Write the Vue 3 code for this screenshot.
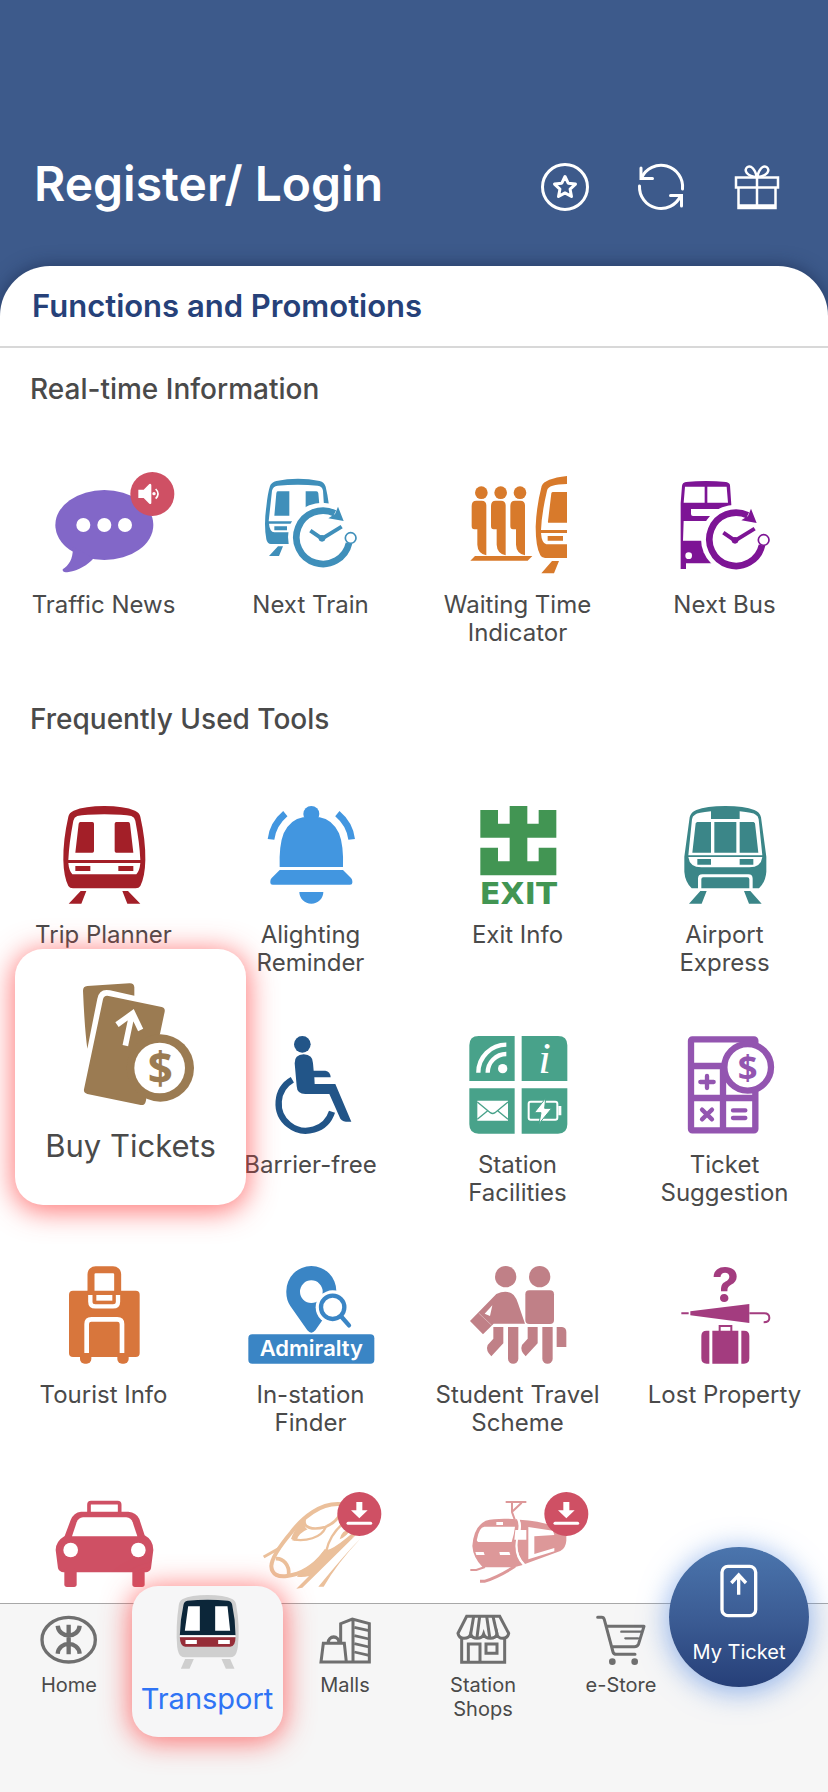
<template>
  <div class="page">
    <header class="top">
      <a class="login" href="#login">Register/ Login</a>
      <nav class="top-actions">
        <button type="button" aria-label="Favourites">
          <svg viewBox="0 0 54 54" fill="none" stroke="#fff" stroke-width="3" stroke-linejoin="round">
            <circle cx="27" cy="27" r="22.5" />
            <path d="M27 16.5l3.2 6.7 7.3.9-5.4 5.1 1.4 7.3-6.5-3.6-6.5 3.6 1.4-7.3-5.4-5.1 7.3-.9z" />
          </svg>
        </button>
        <button type="button" aria-label="Refresh">
          <svg viewBox="0 0 54 54" fill="none" stroke="#fff" stroke-width="3" stroke-linecap="round">
            <path d="M7.5 18A21.5 21.5 0 0 1 48.5 29M5.5 26A21.5 21.5 0 0 0 46.5 36" />
            <path d="M7 8v10.5h11.5M47.5 46V35.5h-11" />
          </svg>
        </button>
        <button type="button" aria-label="Rewards">
          <svg viewBox="0 0 54 54" fill="none" stroke="#fff" stroke-width="2.5">
            <path d="M6 17.5h42v10H6zM8.5 27.5V48h37V27.5M27 17.5V48M8.5 45.500h37" />
            <path d="M27 17C25 9 21 5 17.5 7 13 10 17 16.5 27 17zM27 17c2-8 6-12 9.500-10 4.500 3 .5 9.500-9.500 10z" />
          </svg>
        </button>
      </nav>
    </header>

    <main class="sheet">
      <h1 class="sheet-title">Functions and Promotions</h1>
      <div class="sheet-body">
        <section v-for="group in groups" :key="group.title" class="group">
          <h2>{{ group.title }}</h2>
          <div class="grid">
            <div v-for="tool in group.tools" :key="tool.name" class="cell">
              <button type="button" :class="tool.featured ? 'featured' : 'tool'" :aria-label="tool.name">
                <svg :viewBox="tool.box" :color="tool.color" fill="currentColor" v-html="tool.icon"></svg>
                <span v-if="!tool.iconOnly">{{ tool.name }}</span>
              </button>
            </div>
          </div>
        </section>
      </div>
    </main>

    <nav class="tabs">
      <a
        v-for="tab in tabs"
        :key="tab.name"
        :href="'#' + tab.id"
        :class="['tab', { active: tab.id === current }]"
        @click.prevent="current = tab.id"
      >
        <svg :viewBox="tab.box" fill="none" stroke="currentColor" v-html="tab.icon"></svg>
        <span>{{ tab.name }}</span>
      </a>
      <button type="button" class="ticket">
        <svg viewBox="918 282 114 162" fill="none" stroke="#fff" stroke-width="10">
          <rect x="924" y="289" width="101" height="148" rx="18" />
          <path d="M974 374V314M952 339l22-24 22 24" />
        </svg>
        <span>My Ticket</span>
      </button>
    </nav>
  </div>
</template>

<script setup>
import { ref } from 'vue';

const current = ref('transport');

// icon canvases: left-hand and right-hand drawing areas
const L = '104 78 414 294';
const R = '725 78 414 294';

// clock with an arrow, shared by the "next ..." icons
const clock = (dx, dy) => `
  <g transform="translate(${dx} ${dy})" fill="none" stroke="currentColor">
    <circle cx="966" cy="261" r="103" fill="#fff" stroke="none"/>
    <path d="M1003 190A80 80 0 1 0 1046 280" stroke-width="20"/>
    <path d="M1013 170L1030 213L984 205L1004 192Z" fill="currentColor" stroke="none"/>
    <circle cx="1051" cy="264" r="16" fill="#fff" stroke-width="5"/>
    <path d="M930 242L965 266L1024 230" stroke-width="12"/>
    <circle cx="965" cy="265" r="10" fill="currentColor" stroke="none"/>
  </g>`;

const downloadBadge = (x) => `
  <g transform="translate(${x} 132)">
    <circle r="66" fill="#cf5064"/>
    <path d="M-9-36H9V-11H25L0 13L-25-11H-9Z" fill="#fff"/>
    <path d="M-34 28H34" stroke="#fff" stroke-width="9" stroke-linecap="round"/>
  </g>`;

const dollar = (x, y, size) =>
  `<text x="${x}" y="${y}" font-size="${size}" font-weight="700" font-family="Noto Sans, sans-serif" text-anchor="middle">$</text>`;

const waiting = [0, 58, 116].map((x) => `
  <g transform="translate(${x} 0)">
    <circle cx="201" cy="128" r="19"/>
    <path d="M186 152H202Q216 152 216 166V316Q190 310 189 284V238H180Q172 238 172 228V168Q172 152 186 152Z"/>
  </g>`).join('');

const legs = [0, 103].map((x) => `
  <g transform="translate(${x} 0)">
    <path d="M237 261H267V310L231 349Q213 332 220 315L237 296Z"/>
    <path d="M281 261H312V356A15 15 0 0 1 281 356Z"/>
  </g>`).join('');

const groups = [
  {
    title: 'Real-time Information',
    tools: [
      {
        name: 'Traffic News', color: '#8267c8', box: L,
        icon: `<ellipse cx="312" cy="225" rx="147" ry="105"/>
          <path d="M218 290C218 330 205 345 187 358C186 368 195 368 205 366C235 362 262 345 280 325Z"/>
          <g fill="#fff"><circle cx="249" cy="225" r="21"/><circle cx="312" cy="225" r="21"/><circle cx="374" cy="225" r="21"/></g>
          <circle cx="456" cy="132" r="66" fill="#cf5064"/>
          <path d="M414 119H430L447 102Q453 100 453 106V158Q453 164 447 161L430 144H414Z" fill="#fff"/>
          <circle cx="461" cy="131" r="5" fill="#fff"/>
          <path d="M466 117Q480 131 466 146" fill="none" stroke="#fff" stroke-width="5"/>`
      },
      {
        name: 'Next Train', color: '#3f8fba', box: R,
        icon: `<path d="M862 282H812Q801 282 798 268Q790 225 798 170Q802 130 809 108Q813 97 828 93Q893 80 958 93Q972 97 976 110Q982 135 985 160V282Z"/>
          <path d="M805 214L815 122Q818 108 832 107Q893 102 952 107Q966 108 968 122L974 214ZM806 221H890V247H822Q808 246 806 221Z" fill="#fff"/>
          <path d="M832 124H867V197H822L828 130Q829 124 832 124ZM916 124H948Q953 124 954 130L958 175H916ZM822 229H860V241H822ZM833 289H848L836 318H806Z"/>
          ${clock(0, 0)}`
      },
      {
        name: 'Waiting Time Indicator', color: '#d87a2b', box: L,
        icon: `${waiting}
          <path d="M182 318H354L340 332H168Z"/>
          <path d="M458 78Q390 86 382 108Q366 170 364 230Q364 290 378 316Q382 324 392 324H458Z"/>
          <path d="M458 102Q402 102 398 122Q382 190 380 240H458ZM380 249H458V283H396Q382 280 380 249Z" fill="#fff"/>
          <path d="M416 126H458V218H402Q400 218 401 214L411 130Q412 126 416 126ZM400 258H446V272H400ZM413 333H434L419 370H381Z"/>`
      },
      {
        name: 'Next Bus', color: '#7d1495', box: R,
        icon: `<path d="M799 357V160L803 108Q804 98 815 96Q875 90 935 96Q946 98 947 106L951 165V340H815V357Z"/>
          <path d="M812 110H871V158H808ZM879 110H937L941 158H879ZM830 177H930V198H836Q830 198 830 192ZM808 213H900V272H806Z" fill="#fff"/>
          <circle cx="823" cy="317" r="10" fill="#fff"/>
          ${clock(-3, 6)}`
      }
    ]
  },
  {
    title: 'Frequently Used Tools',
    tools: [
      {
        name: 'Trip Planner', color: '#a31f28', box: L,
        icon: `<path d="M312 78Q370 78 404 92Q418 98 420 110Q436 180 435 240Q434 290 420 318Q416 325 406 325H218Q208 325 204 318Q190 290 189 240Q188 180 204 110Q206 98 220 92Q254 78 312 78Z"/>
          <path d="M312 103Q370 103 393 108Q403 112 405 122Q418 190 420 240H204Q206 190 219 122Q221 112 231 108Q254 103 312 103ZM204 249H420Q418 272 408 283H216Q206 272 204 249Z" fill="#fff"/>
          <path d="M240 126H276Q281 126 281 131V213Q281 218 276 218H225L235 131Q236 126 240 126ZM384 126H348Q343 126 343 131V213Q343 218 348 218H399L389 131Q388 126 384 126ZM225 258H270V273H225ZM354 258H399V273H354ZM241 333H258L243 371H205ZM366 333H383L420 371H381Z"/>`
      },
      {
        name: 'Alighting Reminder', color: '#4296e0', box: R,
        icon: `<circle cx="933" cy="102" r="24"/>
          <path d="M838 261Q836 195 850 160Q870 118 908 112H958Q996 118 1016 160Q1030 195 1028 261ZM838 270H1028L1052 294Q1056 298 1056 304V308Q1056 314 1049 314H817Q810 314 810 308V304Q810 298 814 294ZM897 336H969A36 35 0 0 1 897 336Z"/>
          <path d="M812 178Q818 132 855 101M1054 178Q1048 132 1011 101" fill="none" stroke="currentColor" stroke-width="20"/>`
      },
      {
        name: 'Exit Info', color: '#429553', box: L,
        icon: `<path d="M198 90H251V131H286V78H339V131H373V90H426V173H339V244H373V203H426V286H198V203H251V244H286V173H198Z"/>
          <text x="312" y="371" font-size="93" font-weight="700" font-family="DejaVu Sans, sans-serif" text-anchor="middle">EXIT</text>`
      },
      {
        name: 'Airport Express', color: '#3b8688', box: R,
        icon: `<path d="M933 78Q990 78 1020 90Q1036 96 1040 112L1056 230V275Q1054 305 1034 325H1015V296Q1015 283 1002 283H864Q851 283 851 296V325H832Q812 305 810 275V230L826 112Q830 96 846 90Q876 78 933 78Z"/>
          <path d="M890 94Q850 98 842 104Q834 108 833 118L822 226H1044L1033 118Q1032 108 1024 104Q1016 98 976 94V117H890ZM822 231H1044Q1040 262 1005 262H861Q826 262 822 231Z" fill="#fff"/>
          <path d="M848 126H890V218H834L844 130ZM900 126H966V218H900ZM1018 126H976V218H1032L1022 130ZM849 237H890V254H849ZM976 237H1017V254H976ZM861 325V298Q861 292 867 292H999Q1005 292 1005 298V325ZM858 333H877L862 371H824ZM1008 333H989L1004 371H1042Z"/>`
      },
      {
        name: 'Buy Tickets', color: '#9b7b52', box: '213 150 360 390', featured: true,
        icon: `<path d="M249 182Q249 169 262 168L388 160Q402 159 403 172V197L330 181Q298 174 292 206L262 356Q254 300 249 182Z"/>
          <path d="M309 208Q312 195 326 198L485 231Q496 234 494 245L437 515Q434 527 422 525L262 492Q250 489 252 478Z"/>
          <path d="M376 347L396 252M351 284L398 250L422 300" fill="none" stroke="#fff" stroke-width="17"/>
          <circle cx="481" cy="414" r="101"/><circle cx="479" cy="414" r="76" fill="#fff"/>
          ${dollar(481, 461, 132)}`
      },
      {
        name: 'Barrier-free', color: '#225588', box: '725 318 414 294',
        icon: `<circle cx="906" cy="343" r="25"/>
          <path d="M883 400Q882 374 910 373Q938 374 938 400L940 422H975Q990 424 991 442H942L943 462H1005L1053 575Q1030 578 1020 566L987 492H915Q890 492 889 468Z"/>
          <path d="M876 449A82 82 0 1 0 995 545" fill="none" stroke="currentColor" stroke-width="19"/>`
      },
      {
        name: 'Station Facilities', color: '#48a28a', box: L,
        icon: `<path d="M301 78V213H165V106Q165 78 193 78ZM322 78H431Q459 78 459 106V213H322ZM165 235H301V371H193Q165 371 165 343ZM322 235H459V343Q459 371 431 371H322Z"/>
          <g fill="none" stroke="#fff" stroke-width="13">
            <path d="M192 188A84 84 0 0 1 276 104M220 188A56 56 0 0 1 276 132"/>
            <rect x="343" y="275" width="86" height="54" rx="6" stroke-width="6"/>
          </g>
          <circle cx="265" cy="176" r="14" fill="#fff"/>
          <text x="391" y="190" font-size="136" font-style="italic" font-family="Liberation Serif, serif" text-anchor="middle" fill="#fff">i</text>
          <path d="M189 272H281V332H189ZM432 288H441V316H432Z" fill="#fff"/>
          <path d="M189 276L228 308Q235 313 242 308L281 276M189 328L220 302M281 328L250 302" fill="none" stroke="currentColor" stroke-width="4"/>
          <path d="M394 265L360 308H380L374 341L412 295H391Z" fill="#fff" stroke="currentColor" stroke-width="3"/>`
      },
      {
        name: 'Ticket Suggestion', color: '#9355b0', box: R,
        icon: `<g fill="none" stroke="currentColor" stroke-width="19">
            <rect x="830" y="88" width="193" height="273" rx="4"/>
            <path d="M821 168H930M821 264H1030M926 168V361"/>
            <circle cx="1000" cy="172" r="70" fill="#fff"/>
            <path d="M858 216H898M878 198V234M863 299L893 328M893 299L863 328M956 301H993M956 324H993" stroke-width="13" stroke-linecap="round"/>
          </g>
          ${dollar(1000, 209, 104)}`
      },
      {
        name: 'Tourist Info', color: '#d8763c', box: L,
        icon: `<rect x="206" y="152" width="212" height="199" rx="12"/>
          <rect x="239" y="335" width="34" height="36" rx="14"/><rect x="351" y="335" width="34" height="36" rx="14"/>
          <rect x="272" y="89" width="80" height="80" rx="14" fill="#fff" stroke="currentColor" stroke-width="21"/>
          <path d="M262 152H362V165H262Z"/>
          <path d="M270 165V185Q270 199 285 199H338Q353 199 353 185V165" fill="currentColor" stroke="#fff" stroke-width="13"/>
          <path d="M288 165H336V182H288Z" fill="#fff"/>
          <path d="M259 339V252Q259 238 273 238H351Q365 238 365 252V339" fill="none" stroke="#fff" stroke-width="14"/>`
      },
      {
        name: 'In-station Finder', color: '#3a85c5', box: R,
        icon: `<path d="M921 271L870 198Q857 178 858 153A75 75 0 0 1 1008 153Q1008 178 996 198L945 271Q933 285 921 271Z"/>
          <circle cx="933" cy="155" r="34" fill="#fff"/><circle cx="997" cy="202" r="51" fill="#fff"/>
          <g fill="none" stroke="currentColor" stroke-width="13" stroke-linecap="round"><circle cx="997" cy="202" r="35"/><path d="M1024 231L1046 256"/></g>
          <rect x="744" y="283" width="378" height="88" rx="12"/>
          <text x="933" y="349" font-size="66" font-weight="600" font-family="Inter, sans-serif" text-anchor="middle" fill="#fff">Admiralty</text>`
      },
      {
        name: 'Student Travel Scheme', color: '#c08087', box: L,
        icon: `<circle cx="274" cy="110" r="32"/><circle cx="376" cy="110" r="32"/>
          <path d="M246 162Q278 147 298 165Q306 174 311 190L332 251H238L206 283L167 243Z"/>
          <rect x="333" y="151" width="86" height="101" rx="12"/>
          <path d="M234 196L211 221L227 228Z" fill="#fff"/>
          <path d="M193 219L232 256" stroke="#e3c5c8" stroke-width="2"/>
          ${legs}
          <path d="M427 261H443Q456 263 456 276V321H427Z"/>`
      },
      {
        name: 'Lost Property', color: '#a33c7f', box: R,
        icon: `<text x="933" y="187" font-size="146" font-weight="700" font-family="Inter, sans-serif" text-anchor="middle">?</text>
          <path d="M828 214L1005 192V249L828 226ZM885 272V371H877Q861 371 861 355V288Q861 272 877 272ZM894 272H972V371H894ZM981 272H989Q1005 272 1005 288V355Q1005 371 989 371H981Z"/>
          <path d="M801 220H823M1005 220H1050Q1065 220 1065 234Q1065 247 1048 247M916 274V258H951V274" fill="none" stroke="currentColor" stroke-width="6"/>`
      },
      {
        name: 'Taxi', color: '#cf5064', box: L, iconOnly: true,
        icon: `<rect x="266" y="98" width="92" height="34" rx="6" fill="none" stroke="currentColor" stroke-width="11"/>
          <path d="M242 125H384Q408 127 417 147L433 196Q459 210 459 240L452 295Q449 306 436 307H190Q177 306 173 295L166 240Q166 214 193 198L211 150Q220 127 242 125Z"/>
          <rect x="192" y="295" width="37" height="56" rx="8"/><rect x="396" y="295" width="37" height="56" rx="8"/>
          <path d="M248 142H378Q392 143 397 157L411 199H215L229 157Q234 143 248 142Z" fill="#fff"/>
          <circle cx="211" cy="240" r="22" fill="#fff"/><circle cx="414" cy="240" r="22" fill="#fff"/>`
      },
      {
        name: 'High Speed Rail', color: '#ebc09b', box: R, iconOnly: true,
        icon: `<g fill="none" stroke="currentColor" stroke-width="12">
            <path d="M1025 103C960 96 905 145 872 188C845 220 814 262 813 288C814 316 836 321 860 318C905 313 940 290 972 250"/>
            <path d="M790 261L838 234" stroke-width="9"/>
            <path d="M826 266C848 264 868 285 865 314" stroke-width="11"/>
            <path d="M880 212C884 185 900 168 913 150C908 172 935 182 975 171C1000 160 1012 150 1018 132" stroke-width="8"/>
            <path d="M882 209C915 214 962 205 976 172M978 242C984 214 1000 185 1028 160" stroke-width="7"/>
            <path d="M978 246C1005 242 1032 214 1064 190" stroke-width="10"/>
          </g>
          <path d="M872 207Q884 170 916 148Q908 172 922 178Q893 190 889 212ZM900 303Q940 286 974 236Q982 248 1000 238L1066 196L942 318L906 353L888 356L926 318Q910 322 890 320ZM954 350H970Q1010 280 1080 206Q1040 245 954 350ZM1018 208Q1024 180 1050 178Q1040 200 1018 208Z"/>
          ${downloadBadge(1077)}`
      },
      {
        name: 'Light Rail', color: '#dd9899', box: L, iconOnly: true,
        icon: `<path d="M214 152Q250 143 308 148Q318 166 306 205Q296 255 325 285L300 292H205Q176 262 174 228Q178 170 214 152Z"/>
          <path d="M316 149Q370 152 420 168L456 198V212Q454 235 438 243L332 282Q302 250 310 205Q326 175 316 149Z"/>
          <path d="M210 170H302Q300 190 292 216H192Q186 214 188 208Q194 172 210 170ZM246 156H266V165H246ZM183 246H208L211 255H186ZM255 246H285L288 255H257ZM342 171L416 182L420 195L360 199V252L420 234V244L342 268ZM303 180H336V209H300Z" fill="#fff"/>
          <path d="M312 148Q324 168 309 205Q300 255 329 284" fill="none" stroke="#fff" stroke-width="5"/>
          <path d="M274 96H336M293 98V126L301 148M322 98L295 124M168 300H186L212 291" fill="none" stroke="currentColor" stroke-width="6"/>
          <path d="M197 334H210Q250 322 302 289" fill="none" stroke="currentColor" stroke-width="9"/>
          ${downloadBadge(456)}`
      }
    ]
  }
];

const tabs = [
  {
    id: 'home', name: 'Home', box: '109 430 192 156',
    icon: `<ellipse cx="204" cy="507" rx="80" ry="67" stroke-width="10"/>
      <path d="M204 462V551M171 465Q175 495 204 495T237 465M171 549Q175 519 204 519T237 549" stroke="none"/>
      <path d="M204 462V551M171 465C175 504 233 504 237 465M171 549C175 510 233 510 237 549" stroke-width="13"/>`
  },
  {
    id: 'transport', name: 'Transport', box: '520 372 200 228',
    icon: `<g stroke="none">
        <path d="M620 375Q670 375 694 387Q704 392 706 404Q718 470 711 530Q708 552 700 558Q696 562 688 562H552Q544 562 540 558Q532 552 529 530Q524 470 534 404Q536 392 546 387Q570 375 620 375ZM553 567H579L566 596H540ZM662 567H688L701 596H675Z" fill="#cfcfcf"/>
        <path d="M560 392Q620 386 682 392Q692 394 694 404Q704 450 704 496H537Q538 450 548 404Q550 394 560 392Z" fill="#0c2639"/>
        <path d="M537 502H704Q704 530 688 530H553Q538 530 537 502Z" fill="#962d38"/>
        <path d="M562 409H597V482H552ZM643 409H680L688 482H643ZM554 510H588V522H554ZM652 510H687V522H652ZM537 496H704V501H537Z" fill="#fff"/>
      </g>`
  },
  {
    id: 'malls', name: 'Malls', box: '936 430 192 156',
    icon: `<g stroke-width="9"><path d="M967 518H1030L1036 574H960ZM1019 516V459L1054 445L1105 459V574H1036M1056 446V574"/>
      <path d="M982 515A16 16 0 0 1 1014 515" stroke-width="10"/>
      <path d="M1060 470L1104 480M1060 495L1104 505M1060 519L1104 529M1060 544L1104 554" stroke-width="8"/></g>`
  },
  {
    id: 'shops', name: 'Station Shops', box: '110 430 192 156',
    icon: `<g stroke-width="9"><path d="M157 437H256L283 488Q280 503 265 503Q251 503 248 490Q244 503 228 503Q212 503 208 490Q204 503 188 503Q173 503 169 490Q165 503 149 503Q134 503 131 488Z"/>
      <path d="M178 437L169 490M196 437L188 500M217 437L226 500M236 437L248 490M142 500V575H271V500"/>
      <path d="M162 575V520H197V575M215 520H248V548H215Z"/></g>`
  },
  {
    id: 'estore', name: 'e-Store', box: '525 430 192 156',
    icon: `<g stroke-width="9" stroke-linecap="round" stroke-linejoin="round"><path d="M551 440H563Q569 440 571 447L597 544Q599 551 607 551H663M580 467H690L674 519Q671 528 661 528H595"/>
      <path d="M622 483H682M634 503H672" stroke-width="7"/></g>
      <g fill="currentColor" stroke="none"><circle cx="595" cy="573" r="10"/><circle cx="662" cy="573" r="10"/></g>`
  }
];
</script>

<style>
body { margin: 0; background: #3d5a8b; }
</style>

<style scoped>
.page { display: flex; flex-direction: column; height: 100vh; overflow: hidden; background: #3d5a8b; color: #4a4a4a; font-family: Inter, "Noto Sans", sans-serif; }
button { padding: 0; border: 0; background: none; font: inherit; color: inherit; cursor: pointer; }
a { color: inherit; text-decoration: none; }
svg { display: block; overflow: visible; }

.top { display: flex; justify-content: space-between; align-items: flex-end; padding: 154px 44px 52px 34px; }
.login { color: #fff; font-size: 48px; font-weight: 600; line-height: 60px; }
.top-actions { display: flex; gap: 42px; }
.top-actions svg { width: 54px; height: 54px; }

.sheet { flex: 1; min-height: 0; display: flex; flex-direction: column; background: #fff; border-radius: 50px 50px 0 0; box-shadow: 0 0 18px rgba(20, 35, 70, 0.6); }
.sheet-title { margin: 0; padding: 20px 32px; border-bottom: 2px solid #d8d8d8; color: #264179; font-size: 31px; font-weight: 600; line-height: 40px; }
.sheet-body { flex: 1; min-height: 0; overflow-y: auto; scrollbar-width: none; }
.group { padding-top: 24px; }
.group + .group { padding-top: 55px; }
.group h2 { margin: 0 0 70px; padding-left: 30px; font-size: 28px; font-weight: 500; line-height: 34px; }

.grid { display: grid; grid-template-columns: repeat(4, 1fr); row-gap: 59px; }
.cell { position: relative; min-height: 171px; }
.tool { display: flex; flex-direction: column; align-items: center; gap: 17px; width: 100%; font-size: 24px; line-height: 28px; }
.tool svg { width: 138px; height: 98px; }
.tool span { max-width: 172px; }

/* enlarged card floating above its neighbours */
.featured { position: absolute; z-index: 1; top: -87px; left: 15px; display: flex; flex-direction: column; align-items: center; gap: 19px; width: 231px; height: 256px; padding-top: 31px; border-radius: 28px; background: #fff; box-shadow: 0 4px 28px 2px rgba(255, 60, 60, 0.7); font-size: 31px; line-height: 34px; }
.featured svg { width: 120px; height: 130px; }

.tabs { position: relative; z-index: 2; display: grid; grid-template-columns: repeat(6, 1fr); height: 188px; border-top: 1px solid #a8a8a8; background: #f6f6f6; font-size: 20px; line-height: 24px; text-align: center; }
.tab { position: relative; display: flex; flex-direction: column; align-items: center; gap: 7px; padding-top: 10px; }
.tab svg { width: 64px; height: 52px; color: #6f6f6f; }
.tab span { max-width: 90px; }
.tab.active { gap: 12px; margin-top: -18px; padding-top: 8px; color: #2f74f5; font-size: 29px; line-height: 34px; }
.tab.active::before { content: ""; position: absolute; top: 0; width: 151px; height: 151px; border-radius: 26px; background: #f6f6f7; box-shadow: 0 3px 28px 2px rgba(255, 60, 60, 0.7); }
.tab.active svg { position: relative; width: 67px; height: 76px; }
.tab.active span { position: relative; max-width: none; }

.ticket { position: absolute; top: -57px; right: 19px; display: flex; flex-direction: column; align-items: center; gap: 22px; width: 140px; height: 140px; padding-top: 17px; border-radius: 50%; background: linear-gradient(#4b75ad, #3a5a92 55%, #263f78); box-shadow: 0 4px 28px 2px rgba(80, 135, 225, 0.6); color: #fff; }
.ticket svg { width: 38px; height: 54px; }
</style>
